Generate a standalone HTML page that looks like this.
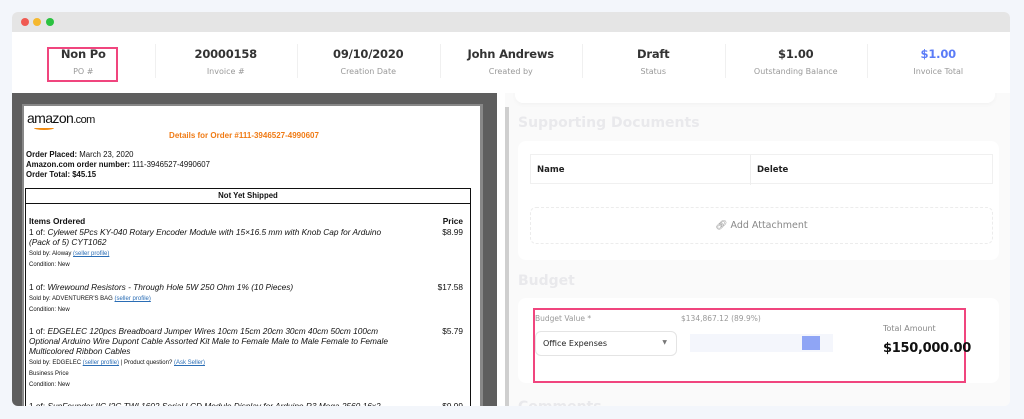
<!DOCTYPE html>
<html><head><meta charset="utf-8"><style>
*{margin:0;padding:0;box-sizing:border-box}
body{width:1024px;height:419px;background:#f3f6fb;font-family:"DejaVu Sans","Liberation Sans",sans-serif;position:relative;overflow:hidden}
.win{position:absolute;left:12px;top:12px;width:998px;height:394px;background:#fafafa;border-radius:6px;overflow:hidden}
.tb{height:20px;background:#e5e5e5;position:relative}
.dot{position:absolute;top:6px;width:8px;height:8px;border-radius:50%}
.hdr{position:absolute;top:20px;left:0;width:998px;height:61px;background:#fff;display:flex}
.col{width:142.5px;text-align:center;padding-top:15px;position:relative}
.col+.col:before{content:"";position:absolute;left:0;top:12px;height:34px;border-left:1px solid #f0f0f0}
.v{font-size:11.5px;font-weight:bold;color:#333;letter-spacing:-0.2px}
.l{font-size:8px;color:#999;margin-top:6px}
.pink{position:absolute;border:2px solid #f0457e}
.left{position:absolute;left:0;top:81px;width:485px;height:313px;background:#5e5e5e}
.doc{position:absolute;left:10px;top:11px;width:461px;height:310px;background:#fff;border:2px solid #888;border-right:3px solid #888;font-family:"Liberation Sans",sans-serif;color:#111;overflow:hidden}
.doc i{font-style:italic}
.sm{font-size:6px;margin-top:2px}
.a{color:#2a6db5;text-decoration:underline}
.it{position:relative;font-size:8.3px;line-height:10px}
.pr{position:absolute;right:4px;top:0}
.right{position:absolute;left:485px;top:81px;width:513px;height:313px;background:#fafafa}
.card{position:absolute;background:#fff;border-radius:8px}
.sec{position:absolute;font-size:14px;font-weight:bold;color:#e9e9ec}
</style></head><body>
<div class="win">
 <div class="tb"><div class="dot" style="left:9px;background:#f05a52"></div><div class="dot" style="left:21px;background:#f5b82e"></div><div class="dot" style="left:34px;background:#2bc240"></div></div>
 <div class="right">
  <div style="position:absolute;left:8px;top:14px;width:3px;height:300px;background:#cfcfcf"></div>
  <div class="card" style="left:18px;top:-10px;width:480px;height:20px;box-shadow:0 2px 4px rgba(0,0,0,.03)"></div>
  <div class="sec" style="left:21px;top:22px">Supporting Documents</div>
  <div class="card" style="left:21px;top:48px;width:481px;height:119px">
   <div style="position:absolute;left:12px;top:13px;width:463px;height:30px;border:1px solid #f0f0f0;font-size:8.5px;font-weight:bold;color:#222">
    <span style="position:absolute;left:6px;top:10px">Name</span>
    <div style="position:absolute;left:219px;top:0;height:30px;border-left:1px solid #eee"></div>
    <span style="position:absolute;left:226px;top:10px">Delete</span></div>
   <div style="position:absolute;left:12px;top:66px;width:463px;height:37px;border:1px dashed #ececec;border-radius:6px;text-align:center;font-size:9.5px;color:#888;line-height:35px">&#128279;&#xFE0E; Add Attachment</div>
  </div>
  <div class="sec" style="left:21px;top:180px">Budget</div>
  <div class="card" style="left:21px;top:205px;width:481px;height:85px"></div>
  <div class="pink" style="left:36px;top:215px;width:433px;height:75px"></div>
  <div style="position:absolute;left:38px;top:221px;font-size:7.5px;color:#999">Budget Value *</div>
  <div style="position:absolute;left:184px;top:221px;font-size:7.5px;color:#999">$134,867.12 (89.9%)</div>
  <div style="position:absolute;left:38px;top:238px;width:142px;height:25px;border:1px solid #e4e4e4;border-radius:6px;font-size:8px;color:#222;padding:7px 7px">Office Expenses<span style="position:absolute;right:9px;top:7px;font-size:6px;color:#777">&#9660;</span></div>
  <div style="position:absolute;left:193px;top:241px;width:143px;height:18px;background:#f4f6fc"></div>
  <div style="position:absolute;left:305px;top:243px;width:18px;height:14px;background:#8fa5f5"></div>
  <div style="position:absolute;left:386px;top:231px;font-size:8px;color:#888">Total Amount</div>
  <div style="position:absolute;left:386px;top:248px;font-size:13px;font-weight:bold;color:#111;letter-spacing:-0.3px">$150,000.00</div>
  <div class="sec" style="left:21px;top:306px">Comments</div>
 </div>
 <div class="left">
  <div class="doc">
   <div style="position:absolute;left:3px;top:4px;font-size:14px;letter-spacing:-0.6px">amazon<span style="font-size:11px">.com</span></div>
   <div style="position:absolute;left:10px;top:20px;width:20px;height:4px;border-bottom:2px solid #f08a10;border-radius:0 0 50% 50%"></div>
   <div style="position:absolute;left:0;width:440px;top:25px;text-align:center;font-size:8px;font-weight:bold;color:#f07b15">Details for Order #111-3946527-4990607</div>
   <div style="position:absolute;left:2px;top:44px;font-size:7.8px;line-height:10px"><b>Order Placed:</b> March 23, 2020<br><b>Amazon.com order number:</b> 111-3946527-4990607<br><b>Order Total: $45.15</b></div>
   <div style="position:absolute;left:1px;top:82px;width:446px;height:240px;border:1.5px solid #111">
    <div style="height:15px;border-bottom:1.5px solid #111;text-align:center;font-size:7.8px;font-weight:bold;line-height:14px">Not Yet Shipped</div>
    <div style="padding:12px 3px 0 3px">
     <div class="it"><b>Items Ordered</b><b class="pr">Price</b></div>
     <div class="it" style="margin-top:1px">1 of: <i>Cylewet 5Pcs KY-040 Rotary Encoder Module with 15×16.5 mm with Knob Cap for Arduino<br>(Pack of 5) CYT1062</i><span class="pr">$8.99</span>
      <div class="sm">Sold by: Aloway <span class="a">(seller profile)</span></div><div class="sm" style="margin-top:1px">Condition: New</div></div>
     <div class="it" style="margin-top:12px">1 of: <i>Wirewound Resistors - Through Hole 5W 250 Ohm 1% (10 Pieces)</i><span class="pr">$17.58</span>
      <div class="sm">Sold by: ADVENTURER'S BAG <span class="a">(seller profile)</span></div><div class="sm" style="margin-top:1px">Condition: New</div></div>
     <div class="it" style="margin-top:11px">1 of: <i>EDGELEC 120pcs Breadboard Jumper Wires 10cm 15cm 20cm 30cm 40cm 50cm 100cm<br>Optional Arduino Wire Dupont Cable Assorted Kit Male to Female Male to Male Female to Female<br>Multicolored Ribbon Cables</i><span class="pr">$5.79</span>
      <div class="sm">Sold by: EDGELEC <span class="a">(seller profile)</span> | Product question? <span class="a">(Ask Seller)</span></div><div class="sm" style="margin-top:1px">Business Price</div><div class="sm" style="margin-top:1px">Condition: New</div></div>
     <div class="it" style="margin-top:11px">1 of: <i>SunFounder IIC I2C TWI 1602 Serial LCD Module Display for Arduino R3 Mega 2560 16x2</i><span class="pr">$9.99</span></div>
    </div>
   </div>
  </div>
 </div>
 <div style="position:absolute;left:485px;top:81px;width:8px;height:313px;background:#fff"></div>
 <div style="position:absolute;left:493px;top:95px;width:4px;height:299px;background:#cfcfcf"></div>
 <div class="hdr">
  <div class="col"><div class="v">Non Po</div><div class="l">PO #</div></div>
  <div class="col"><div class="v">20000158</div><div class="l">Invoice #</div></div>
  <div class="col"><div class="v">09/10/2020</div><div class="l">Creation Date</div></div>
  <div class="col"><div class="v">John Andrews</div><div class="l">Created by</div></div>
  <div class="col"><div class="v">Draft</div><div class="l">Status</div></div>
  <div class="col"><div class="v">$1.00</div><div class="l">Outstanding Balance</div></div>
  <div class="col"><div class="v" style="color:#5b7cf7">$1.00</div><div class="l">Invoice Total</div></div>
 </div>
 <div class="pink" style="left:35px;top:35px;width:71px;height:35px"></div>
</div>
</body></html>
